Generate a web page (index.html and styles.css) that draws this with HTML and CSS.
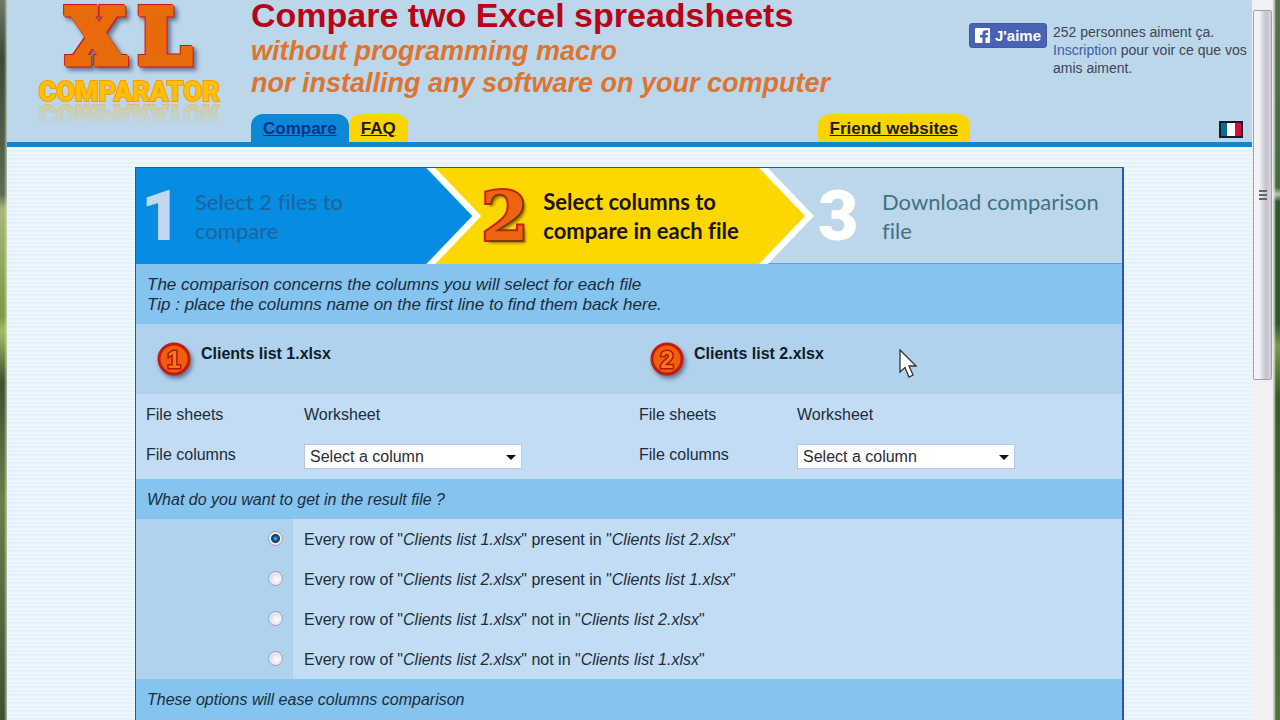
FILE: index.html
```html
<!DOCTYPE html>
<html lang="en">
<head>
  <meta charset="UTF-8">
  <meta name="viewport" content="width=device-width, initial-scale=1.0">
  <title>XL Comparator</title>
  <link rel="stylesheet" href="styles.css">
</head>
<body>
  <div class="edge edge-left"></div>

  <div class="page">
    <!-- Header Section -->
    <header class="header">
      <a href="#" class="logo">
        <span class="logo-xl"><span>X</span><span>L</span></span>
        <span class="logo-name">COMPARATOR</span>
      </a>
      <div class="header-main">
        <div class="header-top">
          <div class="titles">
            <h1>Compare two Excel spreadsheets</h1>
            <h2>without programming macro<br>nor installing any software on your computer</h2>
          </div>
          <div class="like">
            <button type="button" class="like-button">
              <svg width="15" height="15" viewBox="0 0 15 15" aria-hidden="true">
                <rect width="15" height="15" rx="1" fill="#fff"/>
                <path d="M7.500 15V9.500H5V7h2.500V5.500C7.500 3.500 8.800 2.300 10.800 2.300H13V5h-1.300c-.9 0-1.200.4-1.200 1.200V7H13l-.4 2.500h-2.100V15z" fill="#4a62b3"/>
              </svg>
              J'aime
            </button>
            <p>252 personnes aiment ça. <a href="#">Inscription</a> pour voir ce que vos amis aiment.</p>
          </div>
        </div>
        <nav class="nav">
          <a href="#" class="tab active">Compare</a>
          <a href="#" class="tab">FAQ</a>
          <a href="#" class="tab tab-friend">Friend websites</a>
          <a href="#" class="flag" aria-label="Français">
            <svg width="24" height="17" viewBox="0 0 24 17" aria-hidden="true">
              <rect width="24" height="17" fill="#141c30"/>
              <rect x="2" y="2" width="6" height="13" fill="#0c6a9c"/>
              <rect x="8" y="2" width="8" height="13" fill="#fff"/>
              <rect x="16" y="2" width="6" height="13" fill="#d80a3c"/>
            </svg>
          </a>
        </nav>
      </div>
    </header>

    <!-- Comparison Form -->
    <form class="panel">
      <div class="steps">
        <div class="step step-done">
          <div class="step-inner">
            <span class="step-number">1</span>
            <span class="step-text">Select 2 files to<br>compare</span>
          </div>
        </div>
        <div class="step step-current">
          <div class="step-inner">
            <span class="step-number">2</span>
            <span class="step-text">Select columns to<br>compare in each file</span>
          </div>
        </div>
        <div class="step step-next">
          <div class="step-inner">
            <span class="step-number">3</span>
            <span class="step-text">Download comparison<br>file</span>
          </div>
        </div>
      </div>

      <p class="band band-tip">The comparison concerns the columns you will select for each file<br>Tip : place the columns name on the first line to find them back here.</p>

      <div class="files">
        <section class="file">
          <h3>
            <svg width="38" height="42" viewBox="0 0 38 42" class="badge" aria-hidden="true">
              <circle cx="18" cy="18" r="15" fill="#f0600c" stroke="#c41c0c" stroke-width="3"/>
              <text x="18" y="27">1</text>
            </svg>
            Clients list 1.xlsx
          </h3>
          <div class="fields">
            <span>File sheets</span>
            <span>Worksheet</span>
            <label for="column1">File columns</label>
            <div class="select">
              <select id="column1"><option>Select a column</option></select>
            </div>
          </div>
        </section>
        <section class="file">
          <h3>
            <svg width="38" height="42" viewBox="0 0 38 42" class="badge" aria-hidden="true">
              <circle cx="18" cy="18" r="15" fill="#f0600c" stroke="#c41c0c" stroke-width="3"/>
              <text x="18" y="27">2</text>
            </svg>
            Clients list 2.xlsx
          </h3>
          <div class="fields">
            <span>File sheets</span>
            <span>Worksheet</span>
            <label for="column2">File columns</label>
            <div class="select">
              <select id="column2"><option>Select a column</option></select>
            </div>
          </div>
        </section>
        <svg class="cursor" width="18" height="30" viewBox="0 0 18 30" aria-hidden="true">
          <path d="M1 1v22l5-4.500 4 9.500 4-2-4-9h7z" fill="#fff" stroke="#333" stroke-width="1.300"/>
        </svg>
      </div>

      <p class="band" id="resultLabel">What do you want to get in the result file ?</p>

      <div class="options" role="radiogroup" aria-labelledby="resultLabel">
        <div class="option">
          <div class="option-radio"><input type="radio" name="result" id="result1" checked></div>
          <label for="result1">Every row of "<em>Clients list 1.xlsx</em>" present in "<em>Clients list 2.xlsx</em>"</label>
        </div>
        <div class="option">
          <div class="option-radio"><input type="radio" name="result" id="result2"></div>
          <label for="result2">Every row of "<em>Clients list 2.xlsx</em>" present in "<em>Clients list 1.xlsx</em>"</label>
        </div>
        <div class="option">
          <div class="option-radio"><input type="radio" name="result" id="result3"></div>
          <label for="result3">Every row of "<em>Clients list 1.xlsx</em>" not in "<em>Clients list 2.xlsx</em>"</label>
        </div>
        <div class="option">
          <div class="option-radio"><input type="radio" name="result" id="result4"></div>
          <label for="result4">Every row of "<em>Clients list 2.xlsx</em>" not in "<em>Clients list 1.xlsx</em>"</label>
        </div>
      </div>

      <p class="band">These options will ease columns comparison</p>
    </form>
  </div>

  <div class="scrollbar">
    <div class="thumb"></div>
  </div>
  <div class="edge edge-right"></div>
</body>
</html>
```
FILE: styles.css
```css
* {
  box-sizing: border-box;
}
body {
  display: flex;
  height: 100vh;
  margin: 0;
  overflow: hidden;
  font-family: "Liberation Sans", Arial, sans-serif;
  font-size: 16px;
  color: #1c2c3c;
}
h1, h2, h3, p {
  margin: 0;
}

/* Window edges */
.edge {
  flex: none;
  width: 7px;
}
.edge-left {
  background: linear-gradient(to right, transparent 4px, rgba(220, 230, 210, 0.7)), linear-gradient(#6c7868, #3c4a38 8%, #5c6c54 27%, #a8b878 29%, #7c9848 44%, #a4bc60 46%, #405030 53%, #688048 70%, #3c5030);
}
.edge-right {
  background: linear-gradient(to right, rgba(230, 235, 225, 0.8) 1px, transparent 3px), linear-gradient(#587050, #486844 26%, #b8c4b4 27%, #30582c 28%, #30582c 45%, #7c9848 48%, #385c28 55%, #50703c);
}
.page {
  display: flex;
  flex: 1;
  flex-direction: column;
  min-width: 0;
  background: repeating-linear-gradient(#ecf6fc 0, #ecf6fc 2px, #e3f1fa 2px, #e3f1fa 4px);
}

/* Header */
.header {
  display: flex;
  background-color: #bcd6ea;
  border-bottom: 5px solid #0a8ad6;
}
.logo {
  display: flex;
  flex: none;
  flex-direction: column;
  align-items: center;
  width: 244px;
  height: 142px;
  text-decoration: none;
}
.logo-xl {
  display: flex;
  gap: 14px;
  color: #e96a0a;
  font: bold 74px "DejaVu Serif", serif;
  line-height: 74px;
  -webkit-text-stroke: 7px #e96a0a;
  filter: drop-shadow(1px 1px 0 #c8161c) drop-shadow(-1px -1px 0 #c8161c) drop-shadow(3px 3px 2px rgba(40, 50, 90, 0.6));
}
.logo-name {
  color: #ffc000;
  font: 900 27px Roboto, sans-serif;
  line-height: 36px;
  -webkit-text-stroke: 2px #f59a0c;
  paint-order: stroke fill;
  -webkit-box-reflect: below -14px linear-gradient(transparent 20%, rgba(0, 0, 0, 0.5));
}
.header-main {
  display: flex;
  flex: 1;
  flex-direction: column;
  justify-content: space-between;
  min-width: 0;
}
.header-top {
  display: flex;
  justify-content: space-between;
}
.titles {
  white-space: nowrap;
}
h1 {
  margin-bottom: 5px;
  font-size: 34px;
  line-height: 30px;
  color: #b80418;
}
h2 {
  font-size: 27px;
  font-style: italic;
  line-height: 32px;
  color: #dd7430;
}
.like {
  display: flex;
  gap: 6px;
  align-items: flex-start;
  padding: 23px 4px 0 0;
}
.like-button {
  display: flex;
  gap: 5px;
  align-items: center;
  height: 25px;
  padding: 0 5px;
  border: 1px solid #4058a8;
  border-radius: 3px;
  background-color: #4a62b3;
  color: #fff;
  font: bold 15px "Liberation Sans", Arial, sans-serif;
  white-space: nowrap;
}
.like p {
  width: 195px;
  font-size: 14px;
  line-height: 18px;
  color: #3c4656;
}
.like a {
  color: #3c5cac;
  text-decoration: none;
}
.nav {
  display: flex;
  align-items: flex-end;
  padding-right: 9px;
}
.tab {
  height: 28px;
  padding: 0 12px;
  border-radius: 12px 12px 0 0;
  background-color: #fdd400;
  color: #1c1c10;
  font-size: 17px;
  font-weight: bold;
  line-height: 30px;
}
.tab.active {
  background-color: #0a8ad6;
  color: #06308c;
}
.tab-friend {
  margin: 0 249px 0 auto;
}
.flag {
  height: 21px;
}

/* Panel */
.panel {
  flex: 1;
  margin: 20px 128px 0;
  border: 2px solid #2c54b8;
  border-width: 1px 2px 0 1px;
  background-color: #84c4ee;
}
.steps {
  display: flex;
  height: 96px;
}
.step {
  position: relative;
  flex: 342 1 0;
  padding-right: 9px;
  background-color: #fff;
  clip-path: polygon(0 0, calc(100% - 46px) 0, 100% 50%, calc(100% - 46px) 100%, 0 100%);
}
.step-inner {
  display: flex;
  align-items: center;
  height: 100%;
  padding-left: 5px;
  clip-path: polygon(0 0, calc(100% - 46px) 0, 100% 50%, calc(100% - 46px) 100%, 0 100%);
}
.step-number {
  width: 54px;
  font: 900 70px Roboto, sans-serif;
}
.step-text {
  font-family: Lato, sans-serif;
  font-size: 22px;
  font-variant-ligatures: none;
  line-height: 29px;
  white-space: nowrap;
}
.step-done {
  z-index: 3;
}
.step-done .step-inner {
  background-color: #068ce0;
  color: #1c649c;
}
.step-done .step-number {
  color: #c2d8f0;
}
.step-current {
  z-index: 2;
  flex-grow: 376;
  margin-left: -46px;
}
.step-current .step-inner {
  padding-left: 46px;
  background-color: #fcd800;
  color: #1c1400;
  font-weight: bold;
}
.step-current .step-number {
  width: 62px;
  font: bold 68px "DejaVu Serif", serif;
  color: #ec6410;
  -webkit-text-stroke: 4px #cc200c;
  paint-order: stroke fill;
  text-shadow: 3px 3px 3px rgba(90, 70, 0, 0.7);
}
.step-next {
  flex-grow: 360;
  margin-left: -46px;
  padding: 0;
  clip-path: none;
}
.step-next .step-inner {
  padding-left: 50px;
  border-bottom: 1px solid #54a4d4;
  background-color: #bcd6ea;
  color: #427084;
  clip-path: none;
}
.step-next .step-number {
  width: 64px;
  color: #fff;
}
.band {
  padding: 11px 11px 9px;
  background-color: #84c4ee;
  font-style: italic;
  line-height: 20px;
}
.band-tip {
  font-size: 17px;
}

/* Files */
.files {
  position: relative;
  display: grid;
  grid-template-columns: 1fr 1fr;
  background-color: #c2dcf3;
}
.file h3 {
  display: flex;
  gap: 7px;
  height: 70px;
  padding: 17px 0 0 20px;
  background-color: #b0d2ec;
  font-size: 16px;
  line-height: 26px;
  color: #101c28;
}
.badge {
  filter: drop-shadow(2px 3px 2px rgba(50, 50, 80, 0.6));
}
.badge text {
  font: bold 24px "Liberation Sans", sans-serif;
  text-anchor: middle;
  fill: #f87818;
  stroke: #b4180c;
  stroke-width: 3px;
  paint-order: stroke;
}
.fields {
  display: grid;
  grid-template-columns: 158px 1fr;
  grid-template-rows: 40px 45px;
  padding-left: 10px;
  line-height: 42px;
}
.select {
  position: relative;
  width: 218px;
  height: 25px;
  margin-top: 10px;
}
.select select {
  display: block;
  width: 100%;
  height: 100%;
  padding: 0 5px;
  border: 1px solid #b8c8dc;
  border-radius: 0;
  background-color: #fff;
  color: #2c2c34;
  font: 16px "Liberation Sans", Arial, sans-serif;
  appearance: none;
}
.select::after {
  content: "";
  position: absolute;
  top: 11px;
  right: 6px;
  border: 5px solid transparent;
  border-top-color: #111;
  border-bottom: 0;
  pointer-events: none;
}
.cursor {
  position: absolute;
  top: 25px;
  left: 77%;
  margin-left: 4px;
}

/* Options */
.options {
  background-color: #c2dcf3;
}
.option {
  display: grid;
  grid-template-columns: 157px 1fr;
  grid-template-rows: 40px;
  line-height: 42px;
}
.option label {
  padding-left: 11px;
}
.option-radio {
  display: flex;
  justify-content: flex-end;
  padding: 12px 10px 0 0;
  background-color: #b0d2ec;
}
.option input {
  width: 15px;
  height: 15px;
  margin: 0;
  border: 1px solid #98a0b0;
  border-radius: 50%;
  background: radial-gradient(circle at 60% 60%, #fff, #dcd8e4 70%);
  box-shadow: inset 0 0 0 1px #eceef4;
  appearance: none;
}
.option input:checked {
  background: radial-gradient(circle, #58b4dc 0, #0c4478 3px, #143c64 4px, #e8eaf0 5px);
}

/* Scrollbar */
.scrollbar {
  flex: none;
  width: 21px;
  padding: 10px 1px 0;
  background-color: #f2f0f4;
}
.thumb {
  width: 19px;
  height: 370px;
  border: 1px solid #a0a0a8;
  border-radius: 2px;
  background: repeating-linear-gradient(#666 0, #666 2px, transparent 2px, transparent 4px) center / 8px 10px no-repeat, linear-gradient(to right, #f4f2f6 30%, #c4c2cc 70%, #d4d2da);
}
```
